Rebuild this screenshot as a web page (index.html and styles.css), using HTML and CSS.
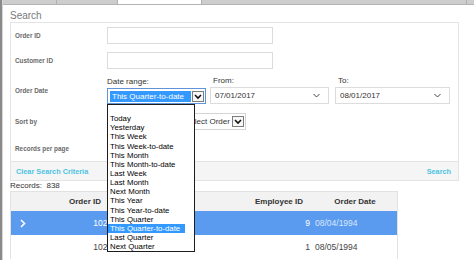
FILE: index.html
```html
<!DOCTYPE html>
<html>
<head>
  <title>Order Search</title>
  <link rel="stylesheet" href="styles.css">
</head>
<body>
  <div class="side-strip"></div>
  <div class="page">
    <div class="tab-bar">
      <span class="tab first"></span>
      <span class="tab second"></span>
      <span class="tab active"></span>
      <span class="tab rest"></span>
    </div>

    <h2 class="panel-title">Search</h2>
    <div class="search-panel">
      <div class="panel-body">
        <div class="form-row row-order">
          <label class="row-label">Order ID</label>
          <div class="text-box"></div>
        </div>
        <div class="form-row row-customer">
          <label class="row-label">Customer ID</label>
          <div class="text-box"></div>
        </div>
        <div class="form-row row-date">
          <label class="row-label">Order Date</label>
          <div class="date-group">
            <div class="field field-range">
              <div class="field-label">Date range:</div>
              <div class="old-select focused">
                <span class="picked">This Quarter-to-date</span>
                <span class="arrow-box">
                  <svg width="10" height="9" viewBox="0 0 10 9"><path d="M2 3 L5 6 L8 3" fill="none" stroke="#111" stroke-width="1.6"/></svg>
                </span>
              </div>
            </div>
            <div class="field field-from">
              <div class="field-label">From:</div>
              <div class="date-box">
                <span>07/01/2017</span>
                <svg width="7" height="5" viewBox="0 0 7 5"><path d="M0.5 1 L3.5 4 L6.5 1" fill="none" stroke="#444" stroke-width="1"/></svg>
              </div>
            </div>
            <div class="field field-to">
              <div class="field-label">To:</div>
              <div class="date-box short">
                <span>08/01/2017</span>
                <svg width="7" height="5" viewBox="0 0 7 5"><path d="M0.5 1 L3.5 4 L6.5 1" fill="none" stroke="#444" stroke-width="1"/></svg>
              </div>
            </div>
          </div>
        </div>
        <div class="form-row row-sort">
          <label class="row-label">Sort by</label>
          <div class="old-select sort-field"></div>
          <div class="old-select sort-order">
            <span class="plain">Select Order</span>
            <span class="arrow-box">
              <svg width="10" height="9" viewBox="0 0 10 9"><path d="M2 3 L5 6 L8 3" fill="none" stroke="#111" stroke-width="1.6"/></svg>
            </span>
          </div>
        </div>
        <div class="form-row row-pages">
          <label class="row-label">Records per page</label>
          <div class="old-select page-size"></div>
        </div>
      </div>
      <div class="panel-footer">
        <a class="link">Clear Search Criteria</a>
        <a class="link">Search</a>
      </div>
    </div>

    <div class="records">Records:&nbsp; 838</div>

    <div class="grid">
      <div class="grid-head">
        <div class="cell head-order">Order ID</div>
        <div class="cell head-customer"></div>
        <div class="cell head-employee">Employee ID</div>
        <div class="cell head-date">Order Date</div>
      </div>
      <div class="grid-row selected">
        <div class="cell expander">
          <svg width="6" height="9" viewBox="0 0 6 9"><path d="M1 1 L4.5 4.5 L1 8" fill="none" stroke="#fff" stroke-width="1.6"/></svg>
        </div>
        <div class="cell num">10248</div>
        <div class="cell mid"></div>
        <div class="cell num">9</div>
        <div class="cell date">08/04/1994</div>
      </div>
      <div class="grid-row">
        <div class="cell expander"></div>
        <div class="cell num">10249</div>
        <div class="cell mid"></div>
        <div class="cell num">1</div>
        <div class="cell date">08/05/1994</div>
      </div>
    </div>

    <!-- open list of the Date range select, drawn over the form -->
    <ul class="range-list">
      <li></li>
      <li>Today</li>
      <li>Yesterday</li>
      <li>This Week</li>
      <li>This Week-to-date</li>
      <li>This Month</li>
      <li>This Month-to-date</li>
      <li>Last Week</li>
      <li>Last Month</li>
      <li>Next Month</li>
      <li>This Year</li>
      <li>This Year-to-date</li>
      <li>This Quarter</li>
      <li class="current">This Quarter-to-date</li>
      <li>Last Quarter</li>
      <li>Next Quarter</li>
    </ul>
  </div>
</body>
</html>
```

FILE: styles.css
```css
* {
  box-sizing: border-box;
}

body {
  margin: 0;
  width: 474px;
  height: 260px;
  overflow: hidden;
  display: flex;
  font-family: "Liberation Sans", Arial, sans-serif;
  background-color: #fff;
  color: #333;
}

.side-strip {
  flex: none;
  width: 3px;
  background-color: #8a8a8a;
  border-right: 1px solid #d6d6d6;
}

.page {
  flex: 1;
  position: relative;
}

/* tabs peeking in at the top */
.tab-bar {
  display: flex;
  height: 5px;
  background-color: #cdcdcd;
  border-bottom: 1px solid #b4b4b4;
}

.tab {
  border-right: 1px solid #b0b0b0;
}

.tab.first { width: 54px; }
.tab.second { width: 61px; }
.tab.active { width: 84px; background-color: #fff; }
.tab.rest { width: 265px; }

.panel-title {
  margin: 5px 0 0 7px;
  font-size: 10px;
  line-height: 12px;
  font-weight: normal;
  color: #7a7a7a;
}

.search-panel {
  margin-left: 7px;
  width: 449px;
  border: 1px solid #e4e4e4;
}

.panel-body {
  padding: 4px 0 4px 4px;
}

.form-row {
  display: flex;
  align-items: center;
}

.row-order { height: 17px; margin-bottom: 8px; }
.row-customer { height: 17px; margin-bottom: 7px; }
.row-date { height: 28px; margin-bottom: 9px; }
.row-sort { height: 17px; margin-bottom: 10px; }
.row-pages { height: 17px; }

.row-label {
  flex: none;
  width: 92px;
  font-size: 6.4px;
  font-weight: bold;
  color: #6a6a6a;
}

.text-box {
  width: 166px;
  height: 17px;
  border: 1px solid #dcdcdc;
  background-color: #fff;
}

.date-group {
  display: flex;
  align-items: flex-end;
  height: 28px;
}

.field-label {
  height: 11px;
  font-size: 8px;
  line-height: 10px;
  color: #333;
}

.field-from { margin-left: 4px; }
.field-to { margin-left: 6px; }
.field-from .field-label,
.field-to .field-label { padding-left: 3px; }

.date-box {
  display: flex;
  align-items: center;
  justify-content: space-between;
  width: 119px;
  height: 17px;
  padding: 0 8px 0 4px;
  border: 1px solid #dcdcdc;
  font-size: 8px;
  color: #333;
}

.date-box.short { width: 115px; }

/* old style select boxes */
.old-select {
  display: flex;
  align-items: center;
  height: 17px;
  border: 1px solid #d4d4d4;
  background-color: #fff;
  font-size: 8px;
  color: #333;
  white-space: nowrap;
}

.old-select.focused {
  width: 99px;
  height: 16px;
  padding: 0 1px 0 2px;
  border-color: #5f94d8;
}

.old-select .picked {
  width: 81px;
  height: 11px;
  padding-left: 2px;
  line-height: 11px;
  background-color: #3399ff;
  color: #fff;
}

.arrow-box {
  flex: none;
  display: flex;
  align-items: center;
  justify-content: center;
  width: 12px;
  height: 11px;
  margin-left: 1px;
  border: 1px solid #7c7c7c;
  background-color: #f7f7f7;
}

.old-select .plain {
  flex: 1;
  padding-left: 2px;
}

.sort-field { width: 73px; }

.sort-order {
  width: 64px;
  margin-left: 2px;
  padding-right: 1px;
}

.page-size { width: 60px; }

.panel-footer {
  display: flex;
  align-items: center;
  justify-content: space-between;
  height: 19px;
  padding: 0 7px 0 5px;
  border-top: 1px solid #e4e4e4;
  background-color: #f5f5f5;
}

.link {
  font-size: 7.3px;
  font-weight: bold;
  color: #4dc3e2;
  cursor: pointer;
}

.records {
  margin-left: 7px;
  height: 10px;
  font-size: 8px;
  line-height: 10px;
  color: #333;
}

/* results grid */
.grid {
  margin-left: 7px;
  width: 388px;
  border: 1px solid #e2e2e2;
  border-bottom: none;
}

.grid-head,
.grid-row {
  display: grid;
  align-items: center;
}

.grid-head {
  grid-template-columns: 109px 90px 103px 84px;
  height: 19px;
  background-color: #f2f2f2;
  font-size: 8px;
  font-weight: bold;
  color: #333;
}

.grid-row {
  grid-template-columns: 19px 90px 90px 103px 84px;
  height: 24px;
  font-size: 8.5px;
  color: #444;
}

.grid-row.selected {
  background-color: #5b9bef;
  color: #fff;
}

.grid-row.selected .date {
  color: #d8e7fb;
}

.cell {
  white-space: nowrap;
}

.head-order { text-align: right; padding-right: 19px; }
.head-employee { text-align: right; padding-right: 10px; }
.head-date { text-align: center; }

.expander {
  display: flex;
  padding-left: 9px;
}

.num { text-align: right; padding-right: 3px; }
.date { padding-left: 2px; }

/* the open dropdown of Date range */
.range-list {
  position: absolute;
  left: 104px;
  top: 104px;
  width: 88px;
  margin: 0;
  padding: 0;
  list-style: none;
  border: 1px solid #1c1c1c;
  background-color: #fff;
}

.range-list li {
  height: 9.15px;
  margin-right: 9px;
  padding-left: 2px;
  font-size: 7.8px;
  line-height: 9.15px;
  color: #000;
  white-space: nowrap;
}

.range-list li.current {
  background-color: #3399ff;
  color: #fff;
}
```
